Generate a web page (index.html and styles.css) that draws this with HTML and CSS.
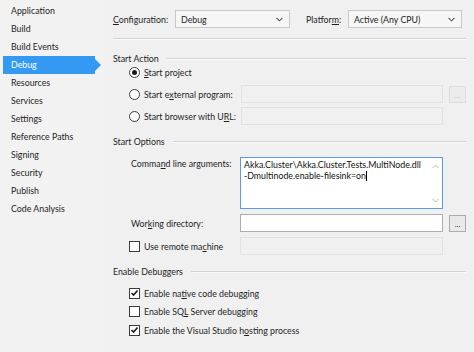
FILE: index.html
```html
<!DOCTYPE html>
<html>
<head>
<meta charset="utf-8">
<link rel="stylesheet" href="styles.css">
</head>
<body>
<div class="window">
  <nav class="side">
    <div class="item">Application</div>
    <div class="item">Build</div>
    <div class="item">Build Events</div>
    <div class="item active">Debug</div>
    <div class="item">Resources</div>
    <div class="item">Services</div>
    <div class="item">Settings</div>
    <div class="item">Reference Paths</div>
    <div class="item">Signing</div>
    <div class="item">Security</div>
    <div class="item">Publish</div>
    <div class="item">Code Analysis</div>
  </nav>
  <main class="content">
    <div class="toprow">
      <span class="lbl cfg-lbl"><u>C</u>onfiguration:</span>
      <div class="combo cfg"><span>Debug</span><svg class="chev" width="7" height="5" viewBox="0 0 7 5"><path d="M0.5 0.8 L3.5 3.8 L6.5 0.8" fill="none" stroke="#555" stroke-width="1.1"/></svg></div>
      <span class="lbl plat-lbl">Platfor<u>m</u>:</span>
      <div class="combo plat"><span>Active (Any CPU)</span><svg class="chev" width="7" height="5" viewBox="0 0 7 5"><path d="M0.5 0.8 L3.5 3.8 L6.5 0.8" fill="none" stroke="#555" stroke-width="1.1"/></svg></div>
    </div>
    <div class="sep"></div>

    <section class="group">
      <div class="ghead"><span>Start Action</span><i class="gline"></i></div>
      <div class="radios">
        <div class="row"><span class="radio on"></span><span class="rtext"><u>S</u>tart project</span></div>
        <div class="row"><span class="radio"></span><span class="rtext wide">Start e<u>x</u>ternal program:</span><div class="field disabled f-ext"></div><div class="btn disabled">...</div></div>
        <div class="row"><span class="radio"></span><span class="rtext wide">Start browser with U<u>R</u>L:</span><div class="field disabled f-url"></div></div>
      </div>
    </section>

    <section class="group opts">
      <div class="ghead"><span>Start Options</span><i class="gline"></i></div>
      <div class="optrow cmd">
        <span class="olbl">Comma<u>n</u>d line arguments:</span>
        <div class="textarea">
          <div class="ta-text">Akka.Cluster\Akka.Cluster.Tests.MultiNode.dll<br>-Dmultinode.enable-filesink=on<span class="caret"></span></div>
          <div class="scroll">
            <svg width="7" height="5" viewBox="0 0 7 5"><path d="M0.5 4 L3.5 1 L6.5 4" fill="none" stroke="#b8b8b8" stroke-width="1"/></svg>
            <svg width="7" height="5" viewBox="0 0 7 5"><path d="M0.5 1 L3.5 4 L6.5 1" fill="none" stroke="#b8b8b8" stroke-width="1"/></svg>
          </div>
        </div>
      </div>
      <div class="optrow">
        <span class="olbl">Wor<u>k</u>ing directory:</span>
        <div class="field white"></div>
        <div class="btn">...</div>
      </div>
      <div class="optrow remote">
        <span class="chk"></span><span class="rtext remote-lbl">Use remote ma<u>c</u>hine</span>
        <div class="field disabled f-remote"></div>
      </div>
    </section>

    <section class="group dbg">
      <div class="ghead"><span>Enable Debuggers</span><i class="gline"></i></div>
      <div class="checks">
        <div class="crow"><span class="chk on"><svg width="9" height="8" viewBox="0 0 9 8"><path d="M1.5 4 L3.6 6 L7.5 1.5" fill="none" stroke="#1a1a1a" stroke-width="1.6"/></svg></span><span class="rtext">Enable na<u>t</u>ive code debugging</span></div>
        <div class="crow"><span class="chk"></span><span class="rtext">Enable SQ<u>L</u> Server debugging</span></div>
        <div class="crow"><span class="chk on"><svg width="9" height="8" viewBox="0 0 9 8"><path d="M1.5 4 L3.6 6 L7.5 1.5" fill="none" stroke="#1a1a1a" stroke-width="1.6"/></svg></span><span class="rtext">Enable the Visual Studio h<u>o</u>sting process</span></div>
      </div>
    </section>
  </main>
</div>
</body>
</html>
```

FILE: styles.css
```css
* { box-sizing: border-box; }
html, body { margin: 0; padding: 0; }
body {
  background: #f0f0f0;
  font-family: Lato, "Noto Sans", sans-serif;
  font-size: 8.8px;
  color: #1e1e1e;
  width: 474px;
  height: 352px;
  overflow: hidden;
}
u { text-decoration: underline; text-underline-offset: 1px; }
.window { display: flex; height: 352px; }

.side {
  width: 104px;
  flex: none;
  padding-top: 2px;
  background: #f2f2f2;
}
.item {
  height: 18px;
  line-height: 18px;
  padding-left: 11px;
  white-space: nowrap;
  position: relative;
}
.item.active {
  background: #3399f3;
  color: #fff;
  margin-left: 3px;
  width: 92px;
  padding-left: 8px;
}
.item.active::after {
  content: "";
  position: absolute;
  right: -6px;
  top: 3px;
  border-left: 6px solid #3399f3;
  border-top: 6px solid transparent;
  border-bottom: 6px solid transparent;
}

.content {
  flex: 1;
  padding: 10px 9px 0 9px;
}
.toprow { display: flex; align-items: center; height: 18px; }
.lbl { white-space: nowrap; }
.cfg-lbl { width: 62px; }
.plat-lbl { width: 42px; margin-left: 16px; }
.combo {
  height: 18px;
  border: 1px solid #c9c9c9;
  background: #f6f6f6;
  display: flex;
  align-items: center;
  justify-content: space-between;
  padding: 0 6px 0 5px;
}
.cfg { width: 115px; }
.plat { width: 114px; }
.chev { flex: none; }

.sep {
  margin-top: 10px;
  height: 2px;
  border-top: 1px solid #d3d3d3;
  border-bottom: 1px solid #fafafa;
}

.ghead {
  display: flex;
  align-items: center;
  height: 14px;
  white-space: nowrap;
}
.gline {
  flex: 1;
  margin-left: 8px;
  height: 2px;
  border-top: 1px solid #d3d3d3;
  border-bottom: 1px solid #fafafa;
  margin-top: 2px;
}
.group { margin-top: 11px; }

.radios { padding-left: 16px; margin-top: -2px; display: flex; flex-direction: column; gap: 4px; }
.row { display: flex; align-items: center; height: 18px; }
.radio {
  width: 11px; height: 11px;
  border: 1px solid #3c3c3c;
  border-radius: 50%;
  background: #fff;
  flex: none;
  position: relative;
}
.radio.on::after {
  content: "";
  position: absolute;
  left: 2px; top: 2px;
  width: 5px; height: 5px;
  border-radius: 50%;
  background: #1a1a1a;
}
.rtext { margin-left: 4px; white-space: nowrap; }
.rtext.wide { width: 97px; }

.field {
  height: 18px;
  border: 1px solid #abadb3;
  background: #fff;
}
.field.disabled { border-color: #e2e2e2; background: #f0f0f0; }
.f-ext { width: 202px; }
.f-url { width: 202px; }
.btn {
  width: 17px; height: 17px;
  margin-left: 6px;
  border: 1px solid #adadad;
  background: #e9e9e9;
  font-size: 8px;
  display: flex; align-items: flex-end; justify-content: center;
  padding-bottom: 3px;
  line-height: 1;
  color: #333;
}
.btn.disabled { border-color: #dcdcdc; background: #ececec; color: #bbb; }

.opts { margin-top: 9px; }
.optrow { display: flex; align-items: center; margin-top: 5px; padding-left: 18px; }
.cmd { margin-top: 9px; align-items: flex-start; }
.olbl { width: 109px; white-space: nowrap; }
.cmd .olbl { margin-top: 1px; }
.optrow .field.white { width: 203px; }
.textarea {
  width: 203px; height: 52px;
  border: 1px solid #569de5;
  background: #fff;
  display: flex;
  justify-content: space-between;
}
.ta-text { padding: 1px 0 0 3px; line-height: 11px; white-space: nowrap; color: #111; font-size: 8.8px; }
.caret { display: inline-block; width: 1px; height: 10px; background: #000; vertical-align: -2px; }
.scroll {
  width: 13px;
  display: flex; flex-direction: column; justify-content: space-between; align-items: center;
  padding: 6px 0 5px;
}
.remote { padding-left: 16px; }
.remote-lbl { width: 96px; }
.f-remote { width: 203px; }

.chk {
  width: 11px; height: 11px;
  border: 1px solid #3c3c3c;
  background: #fff;
  flex: none;
  display: flex; align-items: center; justify-content: center;
}
.dbg { margin-top: 9px; }
.checks { padding-left: 16px; margin-top: 6px; }
.crow { display: flex; align-items: center; height: 18.5px; }
```
